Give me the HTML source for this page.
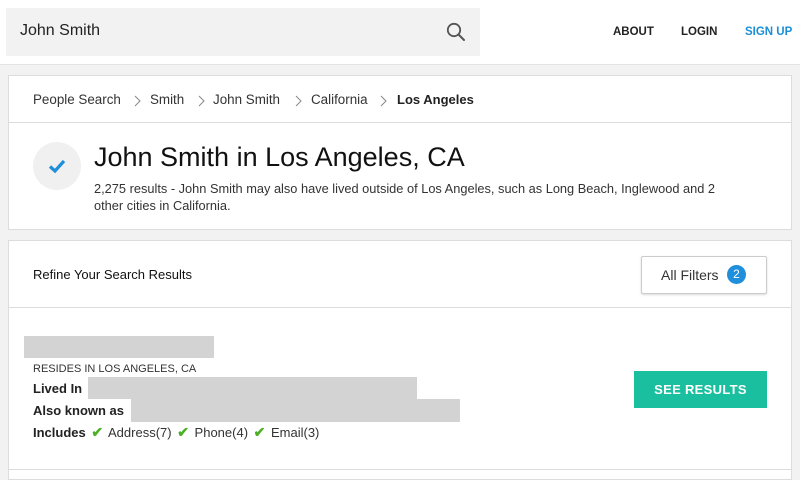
<!DOCTYPE html>
<html><head><style>
*{margin:0;padding:0;box-sizing:border-box}
body{width:800px;height:476px;overflow:hidden;background:#f2f2f2;font-family:"Liberation Sans",sans-serif;color:#222;position:relative}
.hdr{position:absolute;left:0;top:0;width:800px;height:65px;background:#fff;border-bottom:1px solid #e4e4e4}
.search{position:absolute;left:6px;top:8px;width:474px;height:48px;background:#f2f2f2}
.search span{position:absolute;left:14px;top:14px;font-size:16px;color:#222}
.nav{position:absolute;top:26px;font-size:11.5px;font-weight:bold;color:#222}
.card{position:absolute;left:8px;width:784px;background:#fff;border:1px solid #dcdcdc}
.abs{position:absolute}
.gray{position:absolute;background:#d3d3d3}
.ck{color:#4caf24;font-weight:bold;font-size:14px}
.bc{position:absolute;top:16px;font-size:13.4px;color:#333;white-space:nowrap}
.sep{position:absolute;top:19px}
</style></head><body>
<div class="hdr">
 <div class="search"><span>John Smith</span>
  <svg class="abs" style="left:440px;top:14px" width="20" height="20" viewBox="0 0 20 20"><circle cx="8" cy="8" r="6.2" fill="none" stroke="#555" stroke-width="1.8"/><path d="M12.5 12.5L18 18" stroke="#555" stroke-width="2" stroke-linecap="round"/></svg>
 </div>
 <div class="nav" style="left:613px">ABOUT</div>
 <div class="nav" style="left:681px">LOGIN</div>
 <div class="nav" style="left:745px;color:#1a8fd6">SIGN UP</div>
</div>
<div class="card" style="top:75px;height:155px">
 <div class="abs" style="left:0;top:0;width:782px;height:47px;border-bottom:1px solid #dcdcdc"></div>
 <div class="bc" style="left:24px">People Search</div>
 <svg class="sep" style="left:124px" width="8" height="12" viewBox="0 0 8 12"><path d="M2 1l5 5-5 5" fill="none" stroke="#888" stroke-width="1"/></svg>
 <div class="bc" style="left:141px">Smith</div>
 <svg class="sep" style="left:188px" width="8" height="12" viewBox="0 0 8 12"><path d="M2 1l5 5-5 5" fill="none" stroke="#888" stroke-width="1"/></svg>
 <div class="bc" style="left:204px">John Smith</div>
 <svg class="sep" style="left:285px" width="8" height="12" viewBox="0 0 8 12"><path d="M2 1l5 5-5 5" fill="none" stroke="#888" stroke-width="1"/></svg>
 <div class="bc" style="left:302px">California</div>
 <svg class="sep" style="left:370px" width="8" height="12" viewBox="0 0 8 12"><path d="M2 1l5 5-5 5" fill="none" stroke="#888" stroke-width="1"/></svg>
 <div class="bc" style="left:388px;font-weight:bold;color:#222;font-size:13px">Los Angeles</div>
 <div class="abs" style="left:24px;top:66px;width:48px;height:48px;border-radius:50%;background:#f0f0f0"></div>
 <svg class="abs" style="left:38px;top:81px" width="20" height="18" viewBox="0 0 20 18"><path d="M3 9.5L8 14L17 4" fill="none" stroke="#1f8fdb" stroke-width="3.2"/></svg>
 <div class="abs" style="left:85px;top:66px;font-size:27px;color:#111;white-space:nowrap">John Smith in Los Angeles, CA</div>
 <div class="abs" style="left:85px;top:104px;font-size:12.8px;line-height:17px;color:#333;width:640px">2,275 results - John Smith may also have lived outside of Los Angeles, such as Long Beach, Inglewood and 2 other cities in California.</div>
</div>
<div class="card" style="top:240px;height:240px">
 <div class="abs" style="left:0;top:0;width:782px;height:67px;border-bottom:1px solid #dcdcdc"></div>
 <div class="abs" style="left:24px;top:26px;font-size:13px;color:#111">Refine Your Search Results</div>
 <div class="abs" style="left:632px;top:15px;width:126px;height:38px;border:1px solid #ccc;border-radius:2px;box-shadow:0 1px 2px rgba(0,0,0,.15)">
  <span class="abs" style="left:19px;top:10px;font-size:14px;color:#333">All Filters</span>
  <span class="abs" style="left:85px;top:8px;width:19px;height:19px;border-radius:50%;background:#1f8fdb;color:#fff;font-size:12px;text-align:center;line-height:19px">2</span>
 </div>
 <div class="gray" style="left:15px;top:95px;width:190px;height:22px"></div>
 <div class="abs" style="left:24px;top:122px;font-size:11px;color:#333">RESIDES IN LOS ANGELES, CA</div>
 <div class="abs" style="left:24px;top:140px;font-size:13px;font-weight:bold;color:#222">Lived In</div>
 <div class="gray" style="left:79px;top:136px;width:329px;height:22px"></div>
 <div class="abs" style="left:24px;top:162px;font-size:13px;font-weight:bold;color:#222">Also known as</div>
 <div class="gray" style="left:122px;top:158px;width:329px;height:23px"></div>
 <div class="abs" style="left:24px;top:183px;font-size:13px;color:#333;white-space:nowrap;word-spacing:2px"><b style="color:#222">Includes</b> <span class="ck">✔</span> Address(7) <span class="ck">✔</span> Phone(4) <span class="ck">✔</span> Email(3)</div>
 <div class="abs" style="left:625px;top:130px;width:133px;height:37px;background:#19bf9f;color:#fff;font-size:13px;font-weight:bold;text-align:center;line-height:37px;letter-spacing:.3px">SEE RESULTS</div>
 <div class="abs" style="left:0;top:228px;width:782px;height:1px;background:#dcdcdc"></div>
</div>
</body></html>
